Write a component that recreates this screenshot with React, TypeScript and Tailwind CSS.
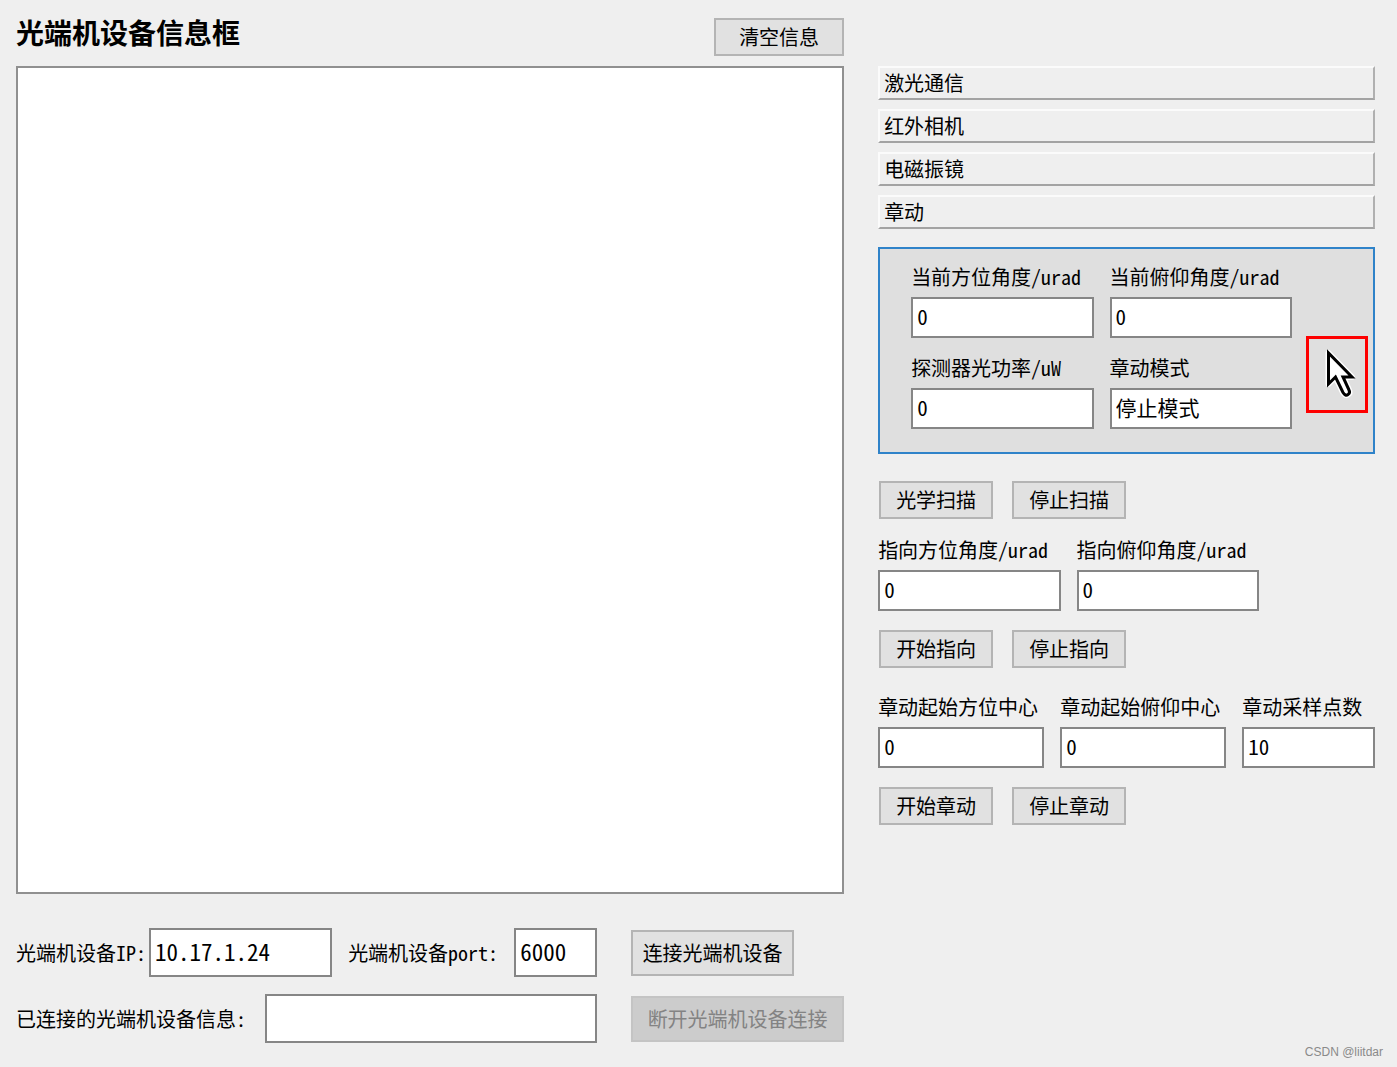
import { useId } from 'react'
import clsx from 'clsx'

const TABS = ['激光通信', '红外相机', '电磁振镜', '章动']

function Button({ label, className, disabled }: { label: string; className?: string; disabled?: boolean }) {
  return (
    <button
      type="button"
      disabled={disabled}
      className={clsx(
        'border-2 border-[#b4b4b4] bg-[#e1e1e1] text-center whitespace-nowrap text-black disabled:border-[#c4c4c4] disabled:bg-[#cccccc] disabled:text-[#838383]',
        className,
      )}
    >
      {label}
    </button>
  )
}

function Field({ label, value, className }: { label: string; value: string; className?: string }) {
  const id = useId()
  return (
    <div className={clsx('flex min-w-0 flex-col gap-2', className)}>
      <label htmlFor={id} className="whitespace-nowrap">{label}</label>
      <input
        id={id}
        defaultValue={value}
        className="h-[41px] w-full border-2 border-[#868686] bg-white px-1 pb-1 text-[21px] outline-none"
      />
    </div>
  )
}

const POINTER = 'M22.5 17 V48 L29.5 41 L37 56.500 Q39.500 60.500 42 58.500 Q44.500 57 43 54 L37 41 H46 Z'

function Pointer() {
  return (
    <svg viewBox="0 0 62 77" className="h-full w-full" aria-hidden="true">
      <path d={POINTER} fill="#fff" stroke="#fff" strokeWidth="6" strokeLinejoin="round" />
      <path d={POINTER} fill="#fff" stroke="#000" strokeWidth="3" strokeLinejoin="miter" />
    </svg>
  )
}

function DevicePanel() {
  return (
    <section className="flex min-w-0 flex-col">
      <header className="mb-2.5 flex h-[38px] items-start justify-between">
        <h1 className="text-[28px] leading-7 font-bold">光端机设备信息框</h1>
        <Button label="清空信息" className="h-[38px] w-[130px]" />
      </header>

      <textarea
        aria-label="光端机设备信息框"
        readOnly
        className="block aspect-square w-full resize-none border-2 border-[#909090] bg-white p-1 outline-none"
      />

      <div className="mt-[34px] grid grid-cols-[minmax(0,1fr)_213px] items-center gap-x-[34px] gap-y-[17px]">
        <div className="flex items-center">
          <label htmlFor="ip" className="w-[133px] shrink-0 whitespace-nowrap">光端机设备IP:</label>
          <input
            id="ip"
            defaultValue="10.17.1.24"
            className="h-[49px] min-w-0 flex-1 border-2 border-[#868686] bg-white px-1 pb-1 text-[23px] outline-none"
          />
          <label htmlFor="port" className="ml-4 w-[166px] shrink-0 whitespace-nowrap">光端机设备port:</label>
          <input
            id="port"
            defaultValue="6000"
            className="h-[49px] w-[83px] border-2 border-[#868686] bg-white px-1 pb-1 text-[23px] outline-none"
          />
        </div>
        <Button label="连接光端机设备" className="h-[46px] w-[163px]" />

        <div className="flex items-center">
          <label htmlFor="connected" className="w-[249px] shrink-0 whitespace-nowrap">已连接的光端机设备信息:</label>
          <input
            id="connected"
            className="h-[49px] min-w-0 flex-1 border-2 border-[#868686] bg-white px-1 pb-1 text-[23px] outline-none"
          />
        </div>
        <Button label="断开光端机设备连接" disabled className="h-[46px] w-full" />
      </div>
    </section>
  )
}

function ControlPanel() {
  return (
    <section className="flex min-w-0 flex-col pt-12">
      <div className="flex flex-col gap-[9px]">
        {TABS.map((tab) => (
          <button
            key={tab}
            type="button"
            className="h-[34px] border-2 border-t-[#fbfbfb] border-r-[#b0b0b0] border-b-[#a3a3a3] border-l-[#fbfbfb] px-1 text-left"
          >
            {tab}
          </button>
        ))}
      </div>

      <div className="relative mt-[18px] grid grid-cols-2 gap-x-4 gap-y-[18px] border-2 border-[#2f83c9] bg-[#dfdfdf] pt-4 pr-[81px] pb-[23px] pl-[31px]">
        <Field label="当前方位角度/urad" value="0" />
        <Field label="当前俯仰角度/urad" value="0" />
        <Field label="探测器光功率/uW" value="0" />
        <Field label="章动模式" value="停止模式" />
        <div className="absolute top-[87px] right-[5px] h-[77px] w-[62px] outline-3 -outline-offset-3 outline-[#fe0000]">
          <Pointer />
        </div>
      </div>

      <div className="mt-[27px] flex gap-[19px] px-px">
        <Button label="光学扫描" className="h-[38px] w-[114px]" />
        <Button label="停止扫描" className="h-[38px] w-[114px]" />
      </div>

      <div className="mt-[19px] mr-[116px] grid grid-cols-2 gap-x-4">
        <Field label="指向方位角度/urad" value="0" />
        <Field label="指向俯仰角度/urad" value="0" />
      </div>

      <div className="mt-[19px] flex gap-[19px] px-px">
        <Button label="开始指向" className="h-[38px] w-[114px]" />
        <Button label="停止指向" className="h-[38px] w-[114px]" />
      </div>

      <div className="mt-[27px] grid grid-cols-[5fr_5fr_4fr] gap-x-4">
        <Field label="章动起始方位中心" value="0" />
        <Field label="章动起始俯仰中心" value="0" />
        <Field label="章动采样点数" value="10" />
      </div>

      <div className="mt-[19px] flex gap-[19px] px-px">
        <Button label="开始章动" className="h-[38px] w-[114px]" />
        <Button label="停止章动" className="h-[38px] w-[114px]" />
      </div>
    </section>
  )
}

export default function App() {
  return (
    <div className="min-h-screen bg-[#efefef] pt-[18px] pr-[22px] pl-4 font-['Noto_Sans_CJK_SC',sans-serif] text-[20px] leading-6 text-black [font-feature-settings:'hwid']">
      <main className="grid grid-cols-[minmax(0,5fr)_minmax(0,3fr)] gap-x-[34px]">
        <DevicePanel />
        <ControlPanel />
      </main>
      <footer className="-mr-2 text-right font-['Liberation_Sans',sans-serif] text-[12px] leading-[18px] text-[#8a8a8a]">
        CSDN @liitdar
      </footer>
    </div>
  )
}
